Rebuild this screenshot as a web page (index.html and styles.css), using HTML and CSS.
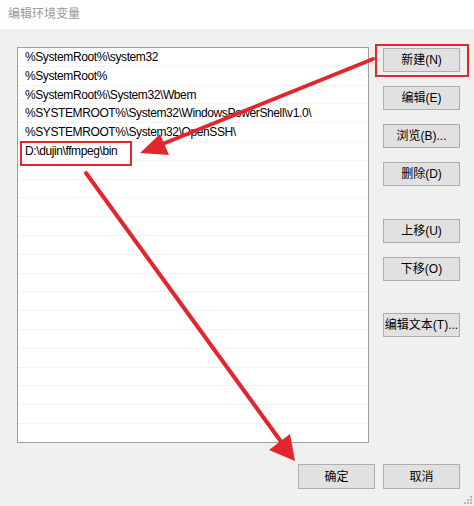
FILE: index.html
```html
<!DOCTYPE html>
<html>
<head>
<meta charset="utf-8">
<link rel="stylesheet" href="styles.css">
</head>
<body>
<div class="window">
  <div class="titlebar">编辑环境变量</div>
  <div class="content">
    <div class="main">
      <div class="list">
        <div class="row">%SystemRoot%\system32</div>
        <div class="row">%SystemRoot%</div>
        <div class="row">%SystemRoot%\System32\Wbem</div>
        <div class="row">%SYSTEMROOT%\System32\WindowsPowerShell\v1.0\</div>
        <div class="row">%SYSTEMROOT%\System32\OpenSSH\</div>
        <div class="row">D:\dujin\ffmpeg\bin</div>
        <div class="row"></div><div class="row"></div><div class="row"></div>
        <div class="row"></div><div class="row"></div><div class="row"></div>
        <div class="row"></div><div class="row"></div><div class="row"></div>
        <div class="row"></div><div class="row"></div><div class="row"></div>
        <div class="row"></div><div class="row"></div><div class="row last"></div>
      </div>
      <div class="side">
        <button class="btn">新建(N)</button>
        <button class="btn">编辑(E)</button>
        <button class="btn">浏览(B)...</button>
        <button class="btn">删除(D)</button>
        <button class="btn gap-lg">上移(U)</button>
        <button class="btn">下移(O)</button>
        <button class="btn gap-lg">编辑文本(T)...</button>
      </div>
    </div>
    <div class="footer">
      <button class="btn">确定</button>
      <button class="btn">取消</button>
    </div>
  </div>
  <div class="grip">
    <svg width="8" height="8" viewBox="0 0 8 8"><g fill="#b8b8b8"><rect x="6" y="0" width="2" height="2"/><rect x="3" y="3" width="2" height="2"/><rect x="6" y="3" width="2" height="2"/><rect x="0" y="6" width="2" height="2"/><rect x="3" y="6" width="2" height="2"/><rect x="6" y="6" width="2" height="2"/></g></svg>
  </div>
  <svg class="annot" width="474" height="506" viewBox="0 0 474 506">
    <g fill="none" stroke="#e3262d" stroke-width="2">
      <rect x="376" y="45" width="92" height="31"/>
      <rect x="21" y="142" width="110" height="23"/>
    </g>
    <g stroke="#e3262d" stroke-width="4" stroke-linecap="round">
      <line x1="373" y1="59" x2="160" y2="145"/>
      <line x1="86" y1="173" x2="282" y2="443"/>
    </g>
    <g fill="#e3262d">
      <polygon points="140,153 160,134 169,155"/>
      <polygon points="295,461 269,450 290,434"/>
    </g>
  </svg>
</div>
</body>
</html>
```

FILE: styles.css
```css
* { box-sizing: border-box; }
html, body { margin: 0; padding: 0; }
body {
  width: 474px;
  height: 506px;
  overflow: hidden;
  background: #f0f0f0;
  font-family: "Liberation Sans", "Noto Sans CJK SC", sans-serif;
  font-size: 12px;
  color: #000;
}
.window {
  position: relative;
  width: 474px;
  height: 506px;
}
.titlebar {
  height: 29px;
  background: #fff;
  color: #999;
  padding-left: 8px;
  line-height: 28px;
  font-size: 12px;
}
.content {
  padding: 18px 14px 0 17px;
}
.main {
  display: flex;
  align-items: flex-start;
}
.list {
  width: 352px;
  height: 396px;
  background: #fff;
  border: 1px solid #a0a0a0;
  overflow: hidden;
}
.row {
  height: 18.8px;
  line-height: 19px;
  padding-left: 7px;
  border-bottom: 1px solid #f3f3f3;
  white-space: nowrap;
  letter-spacing: -0.4px;
}
.row.last { border-bottom: none; }
.side {
  margin-left: 14px;
  display: flex;
  flex-direction: column;
  gap: 14px;
  padding-top: 1px;
}
.side .gap-lg { margin-top: 19px; }
.side .btn:last-child { margin-top: 18px; }
.btn {
  width: 77px;
  height: 24px;
  padding: 0;
  background: #e1e1e1;
  border: 1px solid #adadad;
  font-family: inherit;
  font-size: 12px;
  color: #000;
  line-height: 22px;
  text-align: center;
}
.footer {
  display: flex;
  justify-content: flex-end;
  gap: 8px;
  margin-top: 21px;
}
.footer .btn { height: 25px; }
.grip {
  position: absolute;
  right: 2px;
  bottom: 2px;
  width: 8px;
  height: 8px;
  line-height: 0;
}
.annot {
  position: absolute;
  left: 0;
  top: 0;
  pointer-events: none;
}
```
